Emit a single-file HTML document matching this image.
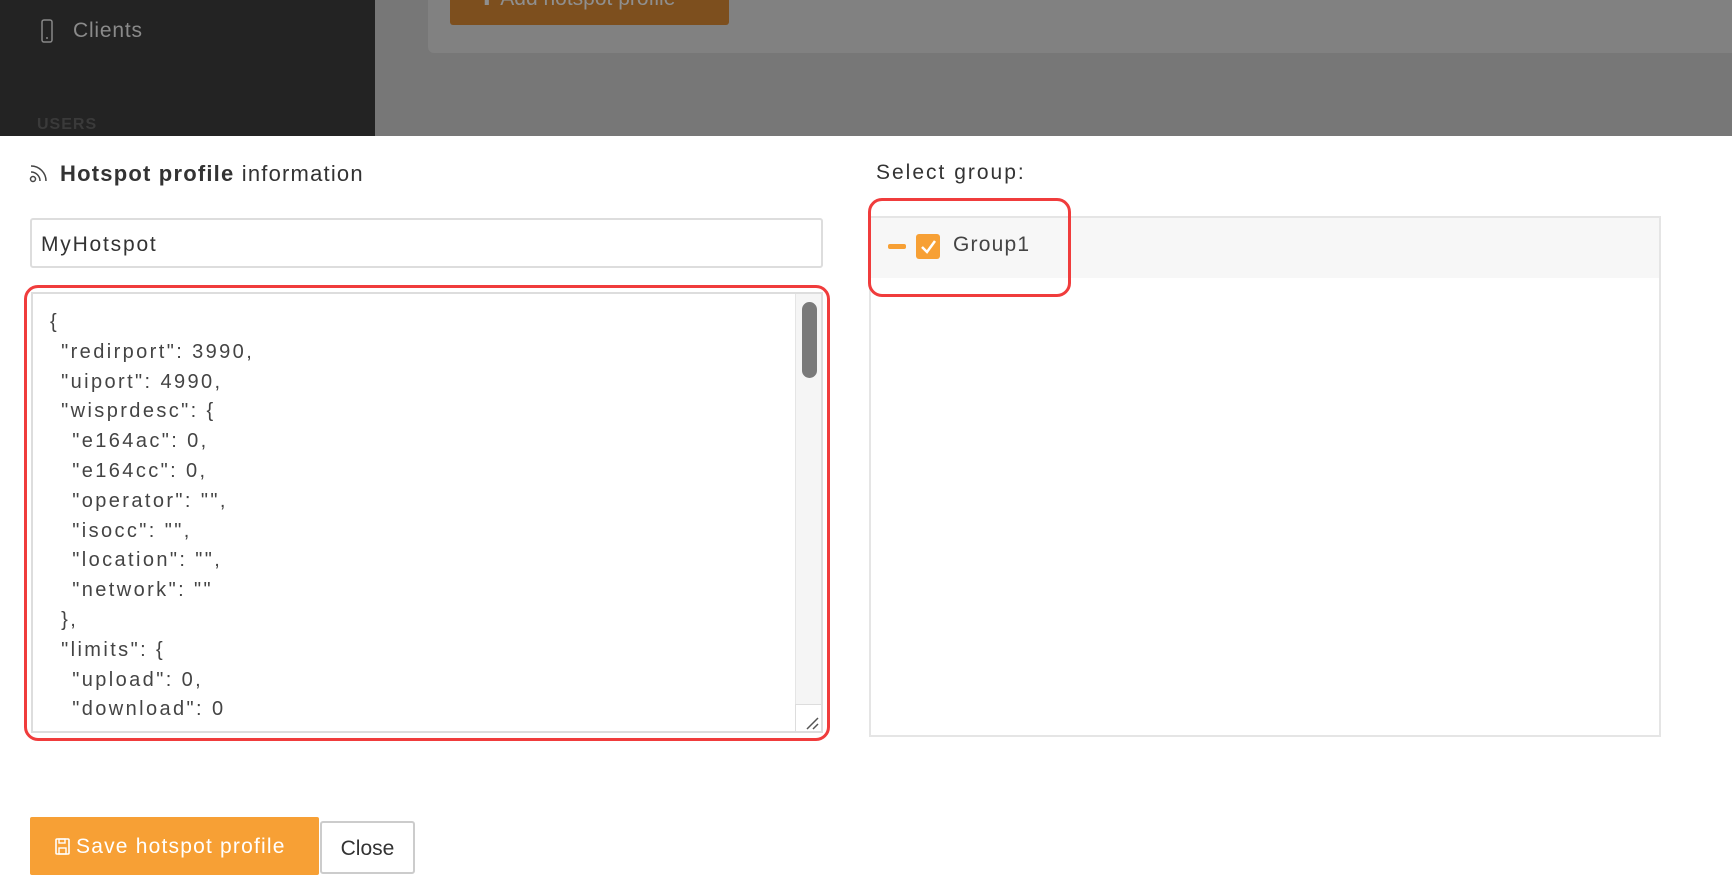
<!DOCTYPE html>
<html><head><meta charset="utf-8"><style>
*{box-sizing:border-box;margin:0;padding:0}
body{width:1732px;height:890px;overflow:hidden;background:#fff;font-family:"Liberation Sans",sans-serif;color:#444;position:relative}
.abs{position:absolute}
.code{position:absolute;left:50px;top:308px;font-size:20px;letter-spacing:2.4px;line-height:29.8px;white-space:pre;color:#444}
.code i{font-style:normal;letter-spacing:0}
</style></head><body>
<div class="abs" style="left:0;top:0;width:1732px;height:136px;background:#777"></div>
<div class="abs" style="left:0;top:0;width:375px;height:136px;background:#232323"></div>
<div class="abs" style="left:428px;top:-10px;width:1320px;height:63px;background:#818181;border-radius:6px"></div>
<div class="abs" style="left:450px;top:-10px;width:279px;height:35px;background:#7d4f1e;border-radius:3px;color:#8f8f8f;font-size:21px;padding-left:28px;line-height:18px;overflow:hidden">✚ Add hotspot profile</div>
<svg class="abs" style="left:41px;top:19px" width="12" height="24"><rect x="1" y="1" width="10" height="22" rx="2" fill="none" stroke="#888" stroke-width="1.5"/><circle cx="6" cy="19" r="1" fill="#888"/></svg>
<div class="abs" style="left:73px;top:19px;font-size:21px;color:#8a8a8a;letter-spacing:0.8px">Clients</div>
<div class="abs" style="left:37px;top:116px;font-size:16px;color:#3a3a3a;font-weight:bold;letter-spacing:1px">USERS</div>

<svg class="abs" style="left:29px;top:161px" width="22" height="22" viewBox="0 0 22 22"><circle cx="4" cy="18" r="2.5" fill="none" stroke="#444" stroke-width="1.5"/><path d="M2 11a9 9 0 0 1 9 9M2 5a15 15 0 0 1 15 15" fill="none" stroke="#444" stroke-width="1.5"/></svg>
<div class="abs" style="left:60px;top:161px;font-size:22px;color:#333;letter-spacing:1.2px"><b style="font-weight:600">Hotspot profile</b> information</div>
<div class="abs" style="left:30px;top:218px;width:793px;height:50px;border:2px solid #ddd;border-radius:3px;font-size:21px;padding:13px 0 0 9px;color:#333;letter-spacing:1.8px">MyHotspot</div>
<div class="abs" style="left:24px;top:285px;width:806px;height:456px;border:3px solid #f03c3c;border-radius:14px"></div>
<div class="abs" style="left:31px;top:292px;width:792px;height:441px;border:2px solid #ddd;overflow:hidden">
<div class="abs" style="left:762px;top:0;width:28px;height:441px;background:#f5f5f5;border-left:1px solid #e5e5e5"></div>
<div class="abs" style="left:769px;top:8px;width:15px;height:76px;background:#7a7a7a;border-radius:8px"></div>
<div class="abs" style="left:762px;top:410px;width:28px;height:30px;background:#fff;border:1px solid #ddd"></div>
<svg class="abs" style="left:772px;top:422px" width="14" height="14"><path d="M2 13L13 2M8 13L13 8" stroke="#555" stroke-width="1.5"/></svg>
</div>
<div class="code">{
<i>  </i>"redirport": 3990,
<i>  </i>"uiport": 4990,
<i>  </i>"wisprdesc": {
<i>    </i>"e164ac": 0,
<i>    </i>"e164cc": 0,
<i>    </i>"operator": "",
<i>    </i>"isocc": "",
<i>    </i>"location": "",
<i>    </i>"network": ""
<i>  </i>},
<i>  </i>"limits": {
<i>    </i>"upload": 0,
<i>    </i>"download": 0</div>

<div class="abs" style="left:876px;top:161px;font-size:21px;color:#333;letter-spacing:2px">Select group:</div>
<div class="abs" style="left:869px;top:216px;width:792px;height:521px;border:2px solid #e5e5e5"></div>
<div class="abs" style="left:871px;top:218px;width:788px;height:60px;background:#f7f7f7"></div>
<div class="abs" style="left:888px;top:244px;width:18px;height:5px;background:#f7a035;border-radius:2px"></div>
<div class="abs" style="left:916px;top:234px;width:24px;height:25px;background:#f7a035;border-radius:3px"></div>
<svg class="abs" style="left:916px;top:234px" width="24" height="25"><path d="M6 13l5 5 8-11" fill="none" stroke="#fff" stroke-width="2.5"/></svg>
<div class="abs" style="left:953px;top:233px;font-size:21px;color:#444;letter-spacing:1.2px">Group1</div>
<div class="abs" style="left:868px;top:198px;width:203px;height:99px;border:3px solid #f03c3c;border-radius:14px"></div>

<div class="abs" style="left:0;top:800px;width:1732px;height:90px;background:radial-gradient(ellipse 900px 90px at 1732px 890px,rgba(0,0,0,0.05),rgba(0,0,0,0))"></div>
<div class="abs" style="left:30px;top:817px;width:289px;height:58px;background:#f7a035;border-radius:2px;color:#fff;font-size:21px;padding:18px 0 0 25px;letter-spacing:1.2px">
<svg style="vertical-align:-2px;margin-right:6px" width="15" height="17"><rect x="1" y="1" width="13" height="15" rx="1" fill="none" stroke="#fff" stroke-width="1.6"/><rect x="4" y="1" width="6" height="4" fill="none" stroke="#fff" stroke-width="1.4"/><rect x="4" y="10" width="7" height="6" fill="none" stroke="#fff" stroke-width="1.4"/></svg>Save hotspot profile</div>
<div class="abs" style="left:320px;top:821px;width:95px;height:53px;border:2px solid #ccc;border-radius:3px;background:#fff;color:#333;font-size:21px;text-align:center;padding-top:14px">Close</div>
</body></html>
